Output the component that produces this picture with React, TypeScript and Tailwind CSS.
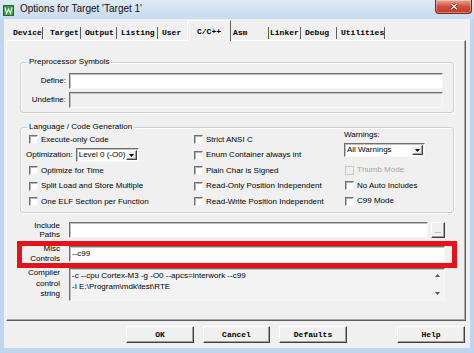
import React from 'react';

const sans = "font-['Liberation_Sans',Arial,sans-serif] text-[8px] text-black";
const mono = "font-['Liberation_Mono','Courier_New',monospace] font-bold text-[8px] text-black";
const sunken =
  'border border-t-[#6e6e6e] border-l-[#6e6e6e] border-b-[#f6f6f6] border-r-[#f6f6f6] shadow-[inset_1px_1px_0_#c2c2c2]';
const raised =
  'bg-[#f0f0f0] border border-t-white border-l-white border-b-[#404040] border-r-[#404040] shadow-[inset_-1px_-1px_0_#a0a0a0]';

function Check({ label, disabled = false }: { label: string; disabled?: boolean }) {
  return (
    <div className="flex items-center h-[15.5px] gap-[3px] whitespace-nowrap">
      <span
        className={
          disabled
            ? 'w-[9px] h-[9px] shrink-0 border border-[#c6c6c6] bg-[#f0f0f0]'
            : 'w-[9px] h-[9px] shrink-0 border border-t-[#707070] border-l-[#707070] border-b-[#f4f4f4] border-r-[#f4f4f4] bg-white shadow-[inset_1px_1px_0_#b4b4b4]'
        }
      />
      <span className={disabled ? 'text-[#a6a6a6]' : ''}>{label}</span>
    </div>
  );
}

function Combo({ value, className }: { value: string; className: string }) {
  return (
    <div className={`flex items-center h-[14px] bg-white ${sunken} ${className}`}>
      <span className="flex-1 pl-[2px] leading-none whitespace-nowrap">{value}</span>
      <span className={`w-[11px] h-[10px] mr-[1px] flex items-center justify-center ${raised}`}>
        <svg width="5" height="3" viewBox="0 0 5 3">
          <path d="M0 0h5L2.5 3z" fill="#000" />
        </svg>
      </span>
    </div>
  );
}

function Tab({ label, w, pl, bar = true }: { label: string; w: string; pl: string; bar?: boolean }) {
  return (
    <>
      <div className={`h-[16px] flex items-center pt-[1px] whitespace-nowrap ${w} ${pl}`}>{label}</div>
      {bar && <span className="w-px h-[12px] mb-[1px] bg-[#5e5e5e]" />}
    </>
  );
}

function Button({ label, className }: { label: string; className: string }) {
  return <div className={`h-[17px] flex items-center justify-center ${raised} ${mono} ${className}`}>{label}</div>;
}

export default function App() {
  return (
    <div className={`w-[474px] h-[353px] flex flex-col overflow-hidden bg-[#c0d6ee] ${sans}`}>
      {/* title bar */}
      <div className="h-[19px] flex items-start bg-gradient-to-b from-[#dfeaf6] to-[#c7dbf0]">
        <svg className="mt-[5px] ml-[3px]" width="11" height="11" viewBox="0 0 11 11">
          <rect x="0" y="0" width="11" height="11" fill="#1d6b2c" />
          <rect x="1" y="1" width="9" height="9" fill="#3a9a45" />
          <path d="M2 2.5l1.6 6 1.9-4.2 1.9 4.2L9 2.5" stroke="#f2f7e8" strokeWidth="1.2" fill="none" />
        </svg>
        <span className="ml-[6px] mt-[3px] text-[10px] leading-[12px] text-[#111]">Options for Target 'Target 1'</span>
        <div className="flex-1" />
        <div className="mr-[2px] w-[37px] h-[14px] rounded-b-[4px] border border-t-0 border-[#7c2418] bg-gradient-to-b from-[#e9a395] via-[#d1503b] to-[#c13a24] flex items-center justify-center shadow-[inset_0_0_0_1px_rgba(255,255,255,0.35)]">
          <svg width="8" height="7" viewBox="0 0 8 7">
            <path d="M1 0.8l6 5.4M7 0.8l-6 5.4" stroke="#5a1a10" strokeWidth="2.6" />
            <path d="M1 0.8l6 5.4M7 0.8l-6 5.4" stroke="#fff" strokeWidth="1.4" />
          </svg>
        </div>
      </div>

      {/* client */}
      <div className="mx-[4px] h-[329px] bg-[#f0f0f0] flex flex-col">
        {/* tabs */}
        <div className={`h-[21px] flex items-end ${mono}`}>
          <Tab label="Device" w="w-[38px]" pl="pl-[9px]" />
          <Tab label="Target" w="w-[37px]" pl="pl-[7px]" />
          <Tab label="Output" w="w-[35px]" pl="pl-[4px]" />
          <Tab label="Listing" w="w-[40px]" pl="pl-[4px]" />
          <Tab label="User" w="w-[29px]" pl="pl-[4px]" bar={false} />
          <div className="relative z-10 -mb-px w-[44px] h-[21px] pt-[2px] flex items-center justify-center bg-[#f0f0f0] border border-b-0 border-t-white border-l-white border-r-[#5e5e5e]">
            C/C++
          </div>
          <Tab label="Asm" w="w-[37px]" pl="pl-[2px]" />
          <Tab label="Linker" w="w-[31px]" pl="pl-[1px]" />
          <Tab label="Debug" w="w-[35px]" pl="pl-[4px]" />
          <Tab label="Utilities" w="w-[47px]" pl="pl-[4px]" />
        </div>

        {/* tab page */}
        <div className="ml-[2px] w-[460px] h-[281px] border border-t-white border-l-white border-r-[#5e5e5e] border-b-[#5e5e5e] shadow-[inset_-1px_-1px_0_#a8a8a8] pt-[16px] pl-[13px]">
          <fieldset className="w-[434px] border border-[#cfcfcf] rounded-[3px] shadow-[inset_1px_1px_0_#fff,1px_1px_0_#fff] pt-[6px] pb-[4px] pr-[9px] flex flex-col gap-[3px]">
            <legend className="ml-[6px] px-[2px] leading-[10px]">Preprocessor Symbols</legend>
            <div className="flex items-center gap-[3px]">
              <span className="w-[45px] text-right">Define:</span>
              <div className={`w-[374px] h-[16px] bg-white ${sunken}`} />
            </div>
            <div className="flex items-center gap-[3px]">
              <span className="w-[45px] text-right">Undefine:</span>
              <div className={`w-[374px] h-[16px] bg-[#f0f0f0] ${sunken}`} />
            </div>
          </fieldset>

          <fieldset className="mt-[9px] w-[434px] border border-[#cfcfcf] rounded-[3px] shadow-[inset_1px_1px_0_#fff,1px_1px_0_#fff] pb-[2px] flex">
            <legend className="ml-[6px] px-[2px] leading-[10px]">Language / Code Generation</legend>
            <div className="w-[173px] pl-[5px] flex flex-col">
              <div className="ml-[3px]">
                <Check label="Execute-only Code" />
              </div>
              <div className="h-[15.5px] flex items-center gap-[3px]">
                <span>Optimization:</span>
                <Combo value="Level 0 (-O0)" className="w-[63px]" />
              </div>
              <div className="ml-[3px]">
                <Check label="Optimize for Time" />
                <Check label="Split Load and Store Multiple" />
                <Check label="One ELF Section per Function" />
              </div>
            </div>
            <div className="w-[150px] flex flex-col">
              <Check label="Strict ANSI C" />
              <Check label="Enum Container always int" />
              <Check label="Plain Char is Signed" />
              <Check label="Read-Only Position Independent" />
              <Check label="Read-Write Position Independent" />
            </div>
            <div className="flex-1 flex flex-col">
              <span className="-mt-[2px] leading-[10px]">Warnings:</span>
              <Combo value="All Warnings" className="mt-[3px] w-[81px]" />
              <div className="mt-[5.5px] ml-[1px]">
                <Check label="Thumb Mode" disabled />
                <Check label="No Auto Includes" />
                <Check label="C99 Mode" />
              </div>
            </div>
          </fieldset>

          <div className="mt-[9px] h-[16px] flex items-center gap-[9px]">
            <span className="w-[40px] text-right leading-[9px]">
              Include
              <br />
              Paths
            </span>
            <div className="flex items-center gap-[3px]">
              <div className={`w-[359px] h-[16px] bg-white ${sunken}`} />
              <div className={`w-[14px] h-[16px] flex items-end justify-center pb-[3px] text-[7px] leading-none text-[#444] ${raised}`}>
                ...
              </div>
            </div>
          </div>

          <div className="relative mt-[8px] h-[16px] flex items-center gap-[9px]">
            <span className="w-[40px] text-right leading-[9.5px]">
              Misc
              <br />
              Controls
            </span>
            <div className={`w-[376px] h-[16px] bg-white flex items-center pl-[2px] ${sunken}`}>--c99</div>
            <div className="absolute -left-[3px] -top-[5px] w-[440px] h-[27px] border-[5px] border-[#e5111b]" />
          </div>

          <div className="mt-[6px] h-[33px] flex items-center gap-[9px]">
            <span className="w-[40px] text-right leading-[10.5px]">
              Compiler
              <br />
              control
              <br />
              string
            </span>
            <div className={`w-[376px] h-[33px] bg-[#f3f3f3] flex ${sunken}`}>
              <div className="flex-1 pl-[2px] pt-[1px] leading-[11px] whitespace-nowrap">
                -c --cpu Cortex-M3 -g -O0 --apcs=interwork --c99
                <br />
                -I E:\Program\mdk\test\RTE
              </div>
              <div className="w-[11px] mr-[1px] flex flex-col justify-between py-[2px] items-center">
                <svg width="5" height="3" viewBox="0 0 5 3" className="mt-[3px]">
                  <path d="M0 3h5L2.5 0z" fill="#555" />
                </svg>
                <svg width="5" height="3" viewBox="0 0 5 3" className="mb-[3px]">
                  <path d="M0 0h5L2.5 3z" fill="#555" />
                </svg>
              </div>
            </div>
          </div>
        </div>

        {/* buttons */}
        <div className="mt-[5px] flex">
          <Button label="OK" className="ml-[122px] w-[68px]" />
          <Button label="Cancel" className="ml-[9px] w-[67px]" />
          <Button label="Defaults" className="ml-[9px] w-[68px]" />
          <Button label="Help" className="ml-[50px] w-[68px]" />
        </div>
      </div>
    </div>
  );
}
